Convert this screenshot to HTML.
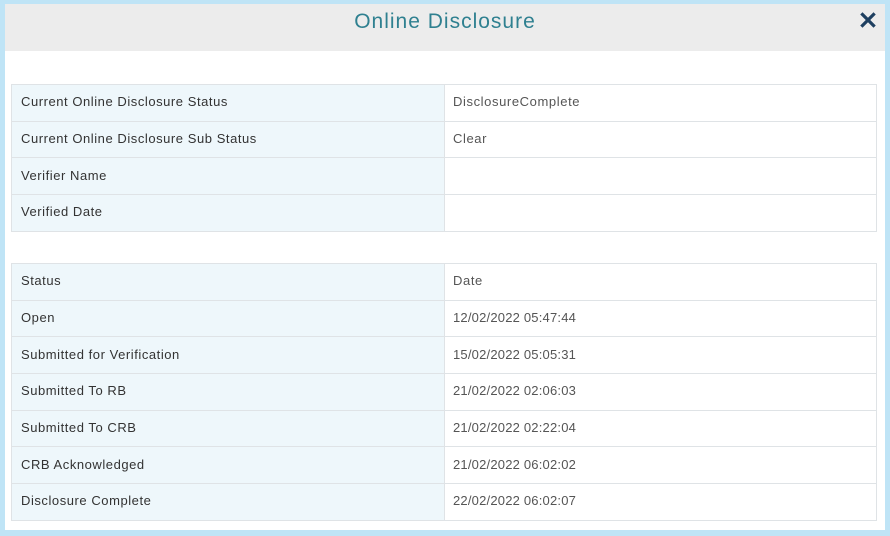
<!DOCTYPE html>
<html><head><meta charset="utf-8"><style>
*{margin:0;padding:0;box-sizing:border-box}
html,body{width:890px;height:536px;overflow:hidden;background:#bfe4f6;font-family:"Liberation Sans",sans-serif}
.box{position:absolute;left:5px;top:4px;width:880px;height:526px;background:#fff}
.hdr{position:absolute;left:0;top:0;width:880px;height:47px;background:#ececec}
.title{position:absolute;left:0;width:880px;top:6px;text-align:center;font-size:21px;color:#2f8090;letter-spacing:1px}
.x{position:absolute;left:854px;top:7px;width:18px;height:18px}
table{position:absolute;left:6px;width:866px;border-collapse:collapse;table-layout:fixed}
td{border:1px solid #dfe3e6;height:36.7px;font-size:13px;padding:0 9px 2px;vertical-align:middle;letter-spacing:0.55px}
td.l{background:#eef7fb;color:#333;width:433px}
td.r{background:#fff;color:#555;padding-left:8px;letter-spacing:0.2px}
td.r.w{letter-spacing:0.6px}
</style></head><body>
<div class="box">
<div class="hdr"><div class="title">Online Disclosure</div>
<svg class="x" viewBox="0 0 18 18"><path d="M3.5 3.5L14.5 14.5M14.5 3.5L3.5 14.5" stroke="#1e3f60" stroke-width="3.2" stroke-linecap="square"/></svg></div>
<table style="top:80px">
<tr><td class="l">Current Online Disclosure Status</td><td class="r w">DisclosureComplete</td></tr>
<tr><td class="l">Current Online Disclosure Sub Status</td><td class="r w">Clear</td></tr>
<tr><td class="l">Verifier Name</td><td class="r"></td></tr>
<tr><td class="l">Verified Date</td><td class="r"></td></tr>
</table>
<table style="top:259px">
<tr><td class="l">Status</td><td class="r w">Date</td></tr>
<tr><td class="l">Open</td><td class="r">12/02/2022 05:47:44</td></tr>
<tr><td class="l">Submitted for Verification</td><td class="r">15/02/2022 05:05:31</td></tr>
<tr><td class="l">Submitted To RB</td><td class="r">21/02/2022 02:06:03</td></tr>
<tr><td class="l">Submitted To CRB</td><td class="r">21/02/2022 02:22:04</td></tr>
<tr><td class="l">CRB Acknowledged</td><td class="r">21/02/2022 06:02:02</td></tr>
<tr><td class="l">Disclosure Complete</td><td class="r">22/02/2022 06:02:07</td></tr>
</table>
</div>
</body></html>
